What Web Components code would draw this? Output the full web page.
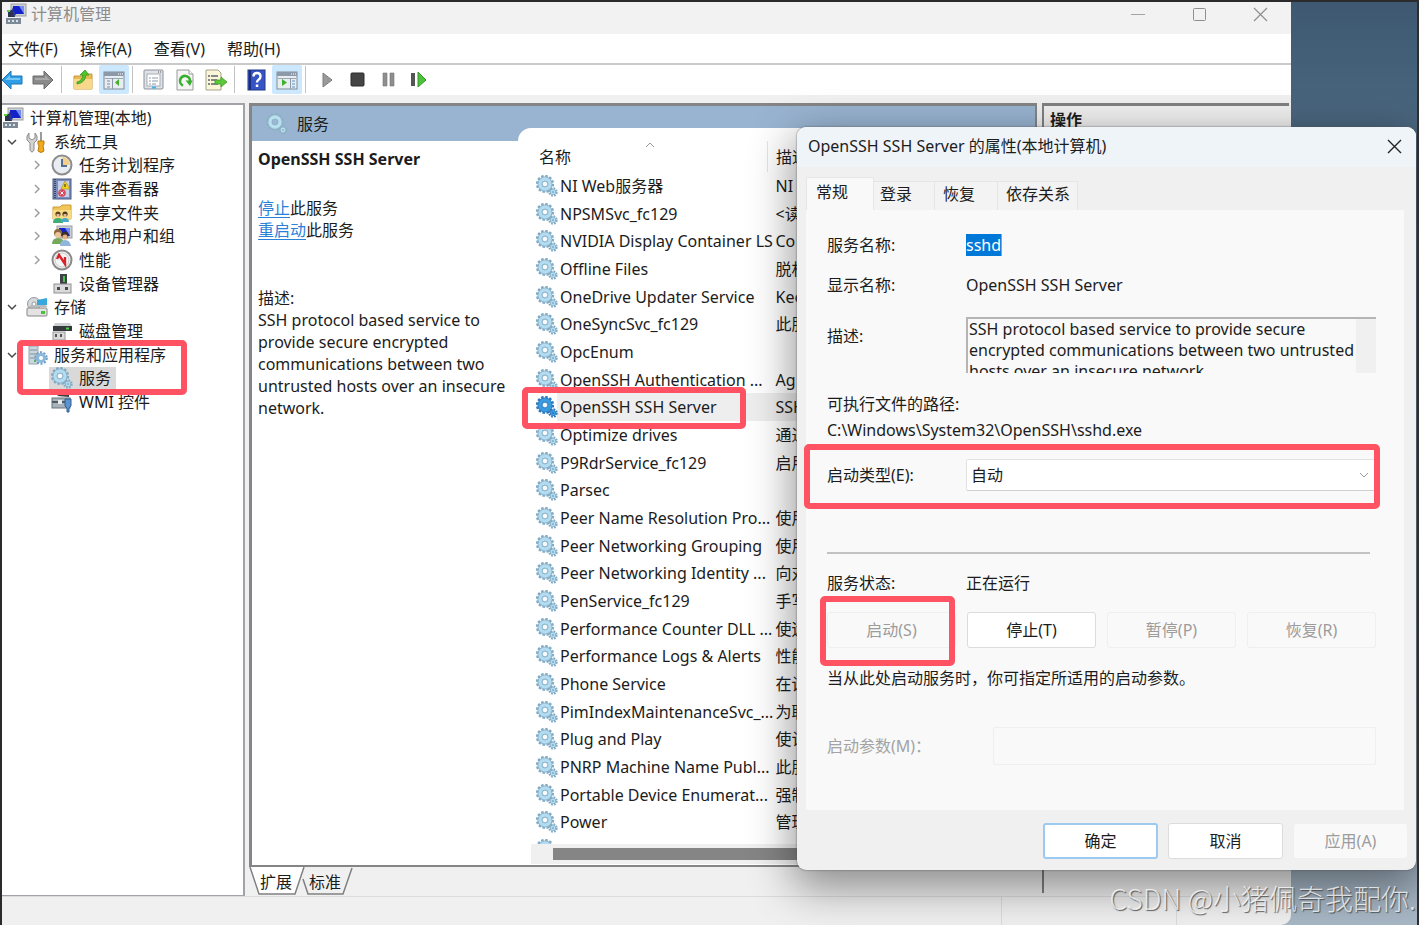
<!DOCTYPE html>
<html lang="zh-CN">
<head>
<meta charset="utf-8">
<title>计算机管理</title>
<style>
  body {
    margin: 0;
    font: 16px/24px 'Noto Sans', 'Noto Sans CJK SC', sans-serif;
    color: #1c1c1c;
  }
</style>
</head>
<body>
<desk-top>
  <console-window>
    <console-tree>
      <tree-node level="0" icon="computer">计算机管理(本地)</tree-node>
      <tree-node level="1" icon="tools" toggle="open">系统工具</tree-node>
      <tree-node level="2" icon="clock" toggle="closed">任务计划程序</tree-node>
      <tree-node level="2" icon="events" toggle="closed">事件查看器</tree-node>
      <tree-node level="2" icon="shared" toggle="closed">共享文件夹</tree-node>
      <tree-node level="2" icon="users" toggle="closed">本地用户和组</tree-node>
      <tree-node level="2" icon="perf" toggle="closed">性能</tree-node>
      <tree-node level="2" icon="device">设备管理器</tree-node>
      <tree-node level="1" icon="storage" toggle="open">存储</tree-node>
      <tree-node level="2" icon="disk">磁盘管理</tree-node>
      <tree-node level="1" icon="server" toggle="open" marked>服务和应用程序</tree-node>
      <tree-node level="2" icon="gear" selected>服务</tree-node>
      <tree-node level="2" icon="wmi">WMI 控件</tree-node>
    </console-tree>
    <services-view></services-view>
    <actions-pane>操作</actions-pane>
  </console-window>
  <service-properties slot="dialog"></service-properties>
  <desk-watermark slot="watermark">CSDN @小猪佩奇我配你.</desk-watermark>
</desk-top>

<script>
const gear = (light, dark, hole) => `
  <circle cx="9" cy="9" r="7.6" fill="none" stroke="${dark}" stroke-width="3" stroke-dasharray="2.4 1.58"/>
  <circle cx="9" cy="9" r="5" fill="none" stroke="${dark}" stroke-width="5"/>
  <circle cx="9" cy="9" r="5" fill="none" stroke="${light}" stroke-width="3.4"/>
  <circle cx="9" cy="9" r="2.8" fill="${hole}" stroke="${dark}" stroke-width=".8"/>
  <circle cx="17" cy="17" r="3.6" fill="none" stroke="${dark}" stroke-width="2.2" stroke-dasharray="1.7 1.13"/>
  <circle cx="17" cy="17" r="3" fill="${dark}"/>
  <circle cx="17" cy="17" r="1.7" fill="none" stroke="${light}" stroke-width="1.4"/>`;

const monitor = (x, y) => `
  <g transform="translate(${x} ${y})">
    <rect width="15" height="12" fill="#cfd0d2" stroke="#9a9da3"/>
    <rect x="2" y="2" width="11" height="8" fill="#1420c8"/>
    <path d="M8 2h5v8z" fill="#6f8dfa"/>
  </g>`;

const paneIcon = (arrow, dots) => `
  <rect x="1" y="3" width="20" height="17" fill="#e9edf1" stroke="#7e8b98"/>
  <rect x="1" y="3" width="20" height="4" fill="#8b99a8"/>
  <path d="M15 5h1M17 5h1M19 5h1" stroke="#fff"/>
  <path d="M2 9.500h18" stroke="#9aa7b4"/>
  ${dots}${arrow}`;

const icons = {
  computer: `${monitor(6, 1)}<path d="M3 9l5-3 2 8H3z" fill="#2b3350"/><path d="M7 4l4 8-3 1z" fill="#28389a"/>
    <rect x="2" y="7" width="3" height="2" fill="#5fd03c"/><rect x="1" y="15" width="15" height="6" fill="#7c8a97"/>
    <path d="M3 18h2M7 18h2M11 18h2" stroke="#dde3e8" stroke-width="2"/>`,
  tools: `<path d="M3 2v5l3 2 3-2V2l2 3v4l-3 3v7q-2 4-4 0v-7L1 9V5z" fill="#d4d4d4" stroke="#8b8b8b"/>
    <path d="M15 1v10" stroke="#9b9b9b" stroke-width="2"/><path d="M12 10h6v3l-1 2 1 5q-3 3-6 0l1-5-1-2z" fill="#f2ab1c" stroke="#b97a10"/>`,
  clock: `<circle cx="11" cy="11" r="9.500" fill="#e7edf2" stroke="#8d8d8d" stroke-width="2"/>
    <path d="M11 11V3a8 8 0 0 1 8 8z" fill="#f2cf8b"/><path d="M11 5v7h5" fill="none" stroke="#54718f" stroke-width="2"/>`,
  events: `<rect x="2" y="1" width="18" height="20" fill="#7a8dbd" stroke="#4c5a82"/><path d="M4 1v20" stroke="#39466e" stroke-width="2" stroke-dasharray="1 1"/>
    <rect x="7" y="3" width="11" height="16" fill="#c4cfe8"/><path d="M14 3l5 8h-9z" fill="#f7d21d" stroke="#a68a13" stroke-width=".6"/>
    <path d="M14 6v3" stroke="#222"/><circle cx="11" cy="15" r="3.800" fill="#d9475a"/><path d="M9.500 13.500l3 3m0-3l-3 3" stroke="#fff"/>`,
  shared: `<path d="M2 5h7l2-2h9v14H2z" fill="#f0c65a" stroke="#c99b34"/><path d="M2 8h18v9H2z" fill="#f9dd85"/>
    <circle cx="7" cy="12" r="2.600" fill="#5c4326"/><circle cx="14" cy="12" r="2.600" fill="#4d3a25"/><path d="M7 12v3M14 12v3" stroke="#e8b991" stroke-width="3"/>
    <path d="M2 21q0-5 5-5t5 5z" fill="#3fae74"/><path d="M10 20q0-4 4-4t4 4z" fill="#4aa9c4"/>`,
  users: `${monitor(6, 1)}<circle cx="7" cy="8" r="4" fill="#8d6a3b"/><circle cx="7" cy="10" r="3" fill="#edc59b"/><path d="M1 19q0-6 6-6t6 6z" fill="#74a85a"/>
    <circle cx="14" cy="10" r="3.500" fill="#3e2f25"/><circle cx="14" cy="12" r="2.600" fill="#e3b389"/><path d="M9 21q0-6 5-6t6 6z" fill="#8fb6dc"/>`,
  perf: `<circle cx="11" cy="11" r="9.500" fill="#f5f5f5" stroke="#8a8a8a" stroke-width="2"/><circle cx="11" cy="11" r="7" fill="none" stroke="#c9c9c9"/>
    <path d="M6 10l2-4 6 9V8" fill="none" stroke="#d8232a" stroke-width="2.400"/>`,
  device: `<rect x="9" y="1" width="7" height="11" fill="#3e4246"/><rect x="12" y="3" width="2" height="6" fill="#49c052"/>
    <rect x="3" y="11" width="17" height="9" fill="#d9d9d9" stroke="#8f8f8f"/><path d="M6 14h3v3H6zM14 14h3v3h-3z" fill="#4a4a4a"/>`,
  storage: `<circle cx="8" cy="8" r="6.500" fill="#d7dadc" stroke="#94999d"/><circle cx="8" cy="8" r="2" fill="#fff" stroke="#94999d"/>
    <path d="M11 4l10-2v7l-10 2z" fill="#38a8dc"/><path d="M2 11l3-2h14l3 2z" fill="#b9bcbf"/><rect x="1" y="12" width="20" height="8" rx="1" fill="#e3e3e3" stroke="#858585"/>
    <rect x="15" y="15" width="4" height="3" fill="#46c23c"/>`,
  disk: `<path d="M4 3h15l2 4H2z" fill="#cdd0d2"/><rect x="2" y="6" width="19" height="5" fill="#35393c"/><path d="M15 8.500h3" stroke="#4bd04f" stroke-width="2"/>
    <rect x="2" y="12" width="12" height="8" fill="#d9d9d9" stroke="#9a9a9a"/><path d="M4 14h2v3H4zM9 14h2v3H9z" fill="#555"/>`,
  server: `<path d="M3 2h9v18H3z" fill="#cbd5dc" stroke="#97a6b0"/><path d="M4 6h7M4 10h7M4 14h7" stroke="#7f919d"/><rect x="8" y="16" width="2" height="2" fill="#53b24a"/>
    <circle cx="15" cy="14" r="5.500" fill="none" stroke="#6c9fc6" stroke-width="2.500" stroke-dasharray="2 1.460"/><circle cx="15" cy="14" r="3.500" fill="none" stroke="#8bb9dc" stroke-width="3"/>`,
  gear: gear('#b4dcf0', '#82abc5', '#f8fbfd'),
  gearfade: gear('#b8e0ee', '#8fb1c6', '#9db8d4'),
  gearblue: gear('#3b9be0', '#2a78bd', '#f4f9ff'),
  wmi: `<path d="M6 5l4-3h8v4z" fill="#3c4146"/><rect x="1" y="7" width="18" height="10" fill="#a7b2bb" stroke="#66727c"/><path d="M1 11h18" stroke="#4f5a63" stroke-width="2"/>
    <path d="M7 9h4v4H7z" fill="#e8ebee"/><path d="M14 8h6v7l-2 2v4h-2v-4l-2-2z" fill="#5a93cf" stroke="#2e5f95"/>`,
  back: `<path d="M1 11l9-9v5h11v8H10v5z" fill="#2e9fe6" stroke="#1c77b8"/><path d="M4 11l5-5v3h10v2z" fill="#74c6f5"/>`,
  forward: `<path d="M21 11l-9-9v5H1v8h11v5z" fill="#8a8a8a" stroke="#6b6b6b"/><path d="M18 11l-5-5v3H3v2z" fill="#aaa"/>`,
  folderup: `<path d="M2 7h8l2-2h8v15H2z" fill="#eabb54" stroke="#c9973a"/><path d="M2 10h18v10H2z" fill="#f8d98c"/>
    <path d="M5 13q5-1 6-7H8l5-5 4 5h-3q-1 8-9 9z" fill="#53c22f" stroke="#349a1b" stroke-width=".8"/>`,
  treepane: paneIcon('<path d="M16 10v7l-4-3.500z" fill="#3fb12b"/>', '<path d="M9.500 9v11" stroke="#8b99a8"/><path d="M4 12h3M4 15h3M4 18h3" stroke="#7e8b98"/>'),
  actionpane: paneIcon('<path d="M6 10v7l5-3.500z" fill="#3fb12b"/>', '<path d="M14.500 9v11" stroke="#8b99a8"/><path d="M16 12h3M16 15h3M16 18h3" stroke="#5b8fc2"/>'),
  props: `<rect x="1" y="1" width="19" height="19" rx="1" fill="#dfe2e6" stroke="#8a919a"/><path d="M15 3h1M17 3h1" stroke="#555"/><rect x="4" y="5" width="13" height="12" fill="#fff" stroke="#a7adb5"/>
    <path d="M6 9h2M6 12h2M6 15h2M9 9h6M9 12h6M9 15h4" stroke="#8d99a8"/><path d="M9 18.500h4" stroke="#3fb5e6" stroke-width="2"/>`,
  refresh: `<path d="M3 1h12l4 4v16H3z" fill="#f5f5f5" stroke="#9b9b9b"/><path d="M15 1v4h4" fill="#fff" stroke="#9b9b9b"/>
    <path d="M9 16.500A5 5 0 1 1 16 12" fill="none" stroke="#38b02f" stroke-width="2.600"/><path d="M11.500 11.500h7l-2.500 5.500z" fill="#38b02f"/>`,
  export: `<path d="M1 1h12l3 3v17H1z" fill="#faf6d7" stroke="#a8a38a"/><path d="M3 7h2M3 11h2M3 15h2M6 7h7M6 11h6M6 15h7" stroke="#5e6470" stroke-width="1.400"/>
    <path d="M10 11h6V8l6 5-6 5v-3h-6z" fill="#5cc83a" stroke="#3c9e22" stroke-width=".8"/>`,
  help: `<rect x="3" y="1" width="17" height="20" fill="#3754c4" stroke="#223888"/><path d="M5 1v20" stroke="#1d2d75" stroke-width="2"/>
    <path d="M8.500 7.500q0-3.500 3.500-3.500t3.500 3.500q0 2-2 3.200-1.500 1-1.500 2.800" fill="none" stroke="#fff" stroke-width="2.400"/><rect x="10.800" y="15.500" width="2.500" height="2.500" fill="#fff"/>`,
  play: `<path d="M7 4l9 7-9 7z" fill="#9a9a9a" stroke="#7d7d7d"/>`,
  stop: `<rect x="4" y="4" width="13" height="13" rx="1" fill="#444" stroke="#2c2c2c"/>`,
  pause: `<path d="M5 4h4v13H5zM12 4h4v13h-4z" fill="#8e8e8e" stroke="#777" stroke-width=".6"/>`,
  restart: `<path d="M2 4h4v13H2z" fill="#555"/><path d="M9 3l8 8-8 7z" fill="#4cc23a" stroke="#38952a"/>`,
  open: `<path d="M7 9l4 4 4-4" fill="none" stroke="#4a4a4a" stroke-width="1.500"/>`,
  closed: `<path d="M9 7l4 4-4 4" fill="none" stroke="#a0a0a0" stroke-width="1.500"/>`
};

function define(name, html, setup) {
  const template = document.createElement('template');
  template.innerHTML = html;
  customElements.define(name, class extends HTMLElement {
    constructor() {
      super();
      this.attachShadow({ mode: 'open' });
      this.shadowRoot.appendChild(template.content.cloneNode(true));
    }

    connectedCallback() {
      if (setup) setup(this, this.shadowRoot);
    }
  });
}

class AppIcon extends HTMLElement {
  connectedCallback() {
    if (!this.shadowRoot) this.attachShadow({ mode: 'open' });
    this.shadowRoot.innerHTML = `
      <style>
        :host { display: block; flex: none; width: 22px; height: 22px; }
        svg { display: block; }
      </style>
      <svg width="22" height="22" viewBox="0 0 22 22" aria-hidden="true">${icons[this.getAttribute('name')] || ''}</svg>`;
  }
}
customElements.define('app-icon', AppIcon);

// red annotation frame, sized by whoever places it
define('mark-frame', `
  <style>
    :host {
      position: absolute;
      z-index: 2;
      box-sizing: border-box;
      border: 6px solid #ff5263;
      border-radius: 5px;
      pointer-events: none;
    }
  </style>
`);

define('desk-top', `
  <style>
    :host {
      display: flex;
      position: relative;
      box-sizing: border-box;
      height: 100vh;
      overflow: hidden;
      padding: 2px 126px 0 2px;
      border-right: 2px solid #2e2e2e;
      background: linear-gradient(#3d5870, #4b6780 14%, #5f7a92 50%, #a9b8c6);
    }
    :host::before {
      content: '';
      position: absolute;
      inset: 0 0 auto 0;
      height: 2px;
      background: #2b2a2c;
    }
    :host::after {
      content: '';
      position: absolute;
      inset: 0 auto 0 0;
      width: 2px;
      background: #2b2a2c;
    }
  </style>
  <slot></slot>
  <slot name="dialog"></slot>
  <slot name="watermark"></slot>
`);

define('console-window', `
  <style>
    :host {
      display: flex;
      flex-direction: column;
      flex: 1;
      min-width: 0;
      background: #f0f0f0;
      border-radius: 0 0 10px 0;
      overflow: hidden;
    }
    header {
      display: flex;
      align-items: center;
      height: 32px;
      box-sizing: border-box;
      padding: 0 21px 8px 3px;
      gap: 4px;
      background: #f2f2f2;
      color: #8c8c8c;
    }
    h1 { flex: 1; margin: 0; font-size: 16px; font-weight: 400; }
    button { border: 0; padding: 0; background: none; font: inherit; color: inherit; }
    .controls { display: flex; gap: 41px; }
    .controls svg { display: block; }
    nav {
      display: flex;
      gap: 22px;
      height: 29px;
      padding-left: 6px;
      background: #fff;
      border-bottom: 2px solid #cacaca;
    }
    .toolbar {
      display: flex;
      align-items: center;
      gap: 1px;
      height: 29px;
      padding-bottom: 1px;
      margin-left: -5px;
      background: #fff;
    }
    .toolbar button { display: grid; place-items: center; width: 30px; height: 29px; border-radius: 2px; }
    .toolbar .on { background: #cce8ff; }
    .toolbar i { width: 1px; height: 27px; margin: 0 5px 0 2px; background: #c3c3c3; }
    main {
      flex: 1;
      min-height: 0;
      display: grid;
      grid-template-columns: 243px minmax(0, 1fr) 250px;
      grid-template-rows: minmax(0, 1fr);
      gap: 4px;
      padding-top: 8px;
    }
    footer {
      display: flex;
      justify-content: flex-end;
      height: 28px;
      border-top: 1px solid #dcdcdc;
    }
    footer span { width: 174px; border-left: 1px solid #dcdcdc; }
    footer span:last-child { width: 114px; }
  </style>
  <header>
    <app-icon name="computer"></app-icon>
    <h1>计算机管理</h1>
    <div class="controls">
      <button aria-label="最小化"><svg width="20" height="20" fill="none" stroke="#a3a3a3"><path d="M3 10.500h14"/></svg></button>
      <button aria-label="最大化"><svg width="20" height="20" fill="none" stroke="#8f8f8f"><rect x="4.500" y="4.500" width="12" height="12" rx="1"/></svg></button>
      <button aria-label="关闭"><svg width="20" height="20" fill="none" stroke="#8f8f8f" stroke-width="1.200"><path d="M4 4l13 13M17 4L4 17"/></svg></button>
    </div>
  </header>
  <nav>
    <button>文件(F)</button>
    <button>操作(A)</button>
    <button>查看(V)</button>
    <button>帮助(H)</button>
  </nav>
  <div class="toolbar">
    <button aria-label="后退"><app-icon name="back"></app-icon></button>
    <button aria-label="前进"><app-icon name="forward"></app-icon></button>
    <i></i>
    <button aria-label="上一级"><app-icon name="folderup"></app-icon></button>
    <button class="on" aria-label="控制台树"><app-icon name="treepane"></app-icon></button>
    <i></i>
    <button aria-label="属性"><app-icon name="props"></app-icon></button>
    <button aria-label="刷新"><app-icon name="refresh"></app-icon></button>
    <button aria-label="导出列表"><app-icon name="export"></app-icon></button>
    <i></i>
    <button aria-label="帮助"><app-icon name="help"></app-icon></button>
    <button class="on" aria-label="操作窗格"><app-icon name="actionpane"></app-icon></button>
    <i></i>
    <button aria-label="启动服务"><app-icon name="play"></app-icon></button>
    <button aria-label="停止服务"><app-icon name="stop"></app-icon></button>
    <button aria-label="暂停服务"><app-icon name="pause"></app-icon></button>
    <button aria-label="重新启动服务"><app-icon name="restart"></app-icon></button>
  </div>
  <main><slot></slot></main>
  <footer><span></span><span></span></footer>
`);

define('console-tree', `
  <style>
    :host {
      display: block;
      box-sizing: border-box;
      padding-top: 1px;
      background: #fff;
      border: 2px solid #a0a3a8;
      border-width: 2px 2px 1px 0;
      line-height: 22px;
    }
    .rows { display: grid; grid-auto-rows: 1fr; height: 308px; }
  </style>
  <div class="rows" role="tree"><slot></slot></div>
`);

define('tree-node', `
  <style>
    :host { display: flex; align-items: center; position: relative; white-space: nowrap; }
    :host([level="2"]) { padding-left: 25px; }
    .toggle { width: 20px; margin-right: 2px; }
    .toggle app-icon { margin-left: -1px; }
    :host([level="0"]) .toggle { display: none; }
    :host([level="0"]) .item { padding-left: 0; }
    .item { display: flex; align-items: center; gap: 6px; padding: 0 5px 0 2px; }
    :host([selected]) .item { background: #d9d9d9; }
    mark-frame { display: none; top: -3px; left: 15px; width: 170px; height: 55px; }
    :host([marked]) mark-frame { display: block; }
  </style>
  <span class="toggle"></span>
  <span class="item"><app-icon></app-icon><span><slot></slot></span></span>
  <mark-frame></mark-frame>
`, (host, root) => {
  host.setAttribute('role', 'treeitem');
  root.querySelector('.item app-icon').setAttribute('name', host.getAttribute('icon'));
  root.querySelector('.item app-icon').connectedCallback();
  const toggle = host.getAttribute('toggle');
  if (toggle) root.querySelector('.toggle').innerHTML = `<app-icon name="${toggle}"></app-icon>`;
});

define('services-view', `
  <style>
    :host { display: flex; flex-direction: column; min-width: 0; }
    .frame {
      flex: 1;
      min-height: 0;
      display: grid;
      grid-template-columns: 266px minmax(0, 1fr);
      grid-template-rows: 35px minmax(0, 1fr);
      border: 3px solid #858585;
      border-right-width: 2px;
      border-bottom-width: 2px;
      background: #fff;
    }
    .banner {
      grid-area: 1 / 1 / 2 / 3;
      display: flex;
      align-items: center;
      gap: 9px;
      padding-left: 14px;
      background: #99b4d1;
    }
    .about { grid-area: 2 / 1; padding: 7px 0 0 6px; line-height: 22px; }
    .about h2 { margin: 0 0 27px; font-size: 16px; line-height: 22px; }
    .about p { margin: 0; }
    .about .links { margin-bottom: 46px; }
    a { color: #2a82d8; text-underline-offset: 3px; }
    service-list { grid-area: 1 / 2 / 3 / 3; margin-top: 22px; }
    .tabs { display: flex; position: relative; z-index: 0; height: 29px; }
    .tabs button {
      position: relative;
      width: 54px;
      margin-right: -5px;
      padding: 0;
      border: 0;
      background: none;
      font: inherit;
      color: inherit;
    }
    .tabs svg { position: absolute; top: 0; left: 0; z-index: -1; }
  </style>
  <div class="frame">
    <div class="banner"><app-icon name="gearfade"></app-icon>服务</div>
    <div class="about">
      <h2>OpenSSH SSH Server</h2>
      <p class="links"><a href="#stop">停止</a>此服务<br><a href="#restart">重启动</a>此服务</p>
      <p>描述:</p>
      <p>SSH protocol based service to provide secure encrypted communications between two untrusted hosts over an insecure network.</p>
    </div>
    <service-list></service-list>
  </div>
  <div class="tabs">
    <button>扩展<svg width="56" height="29"><path d="M1 0l9 27h36l9-27" fill="#fff" stroke="#808080" stroke-width="1.500"/></svg></button>
    <button>标准<svg width="56" height="29"><path d="M5 12l5 15h35l9-26" fill="none" stroke="#808080" stroke-width="1.500"/></svg></button>
  </div>
`);

const services = [
  ['NI Web服务器', 'NI'],
  ['NPSMSvc_fc129', '<读'],
  ['NVIDIA Display Container LS', 'Co'],
  ['Offline Files', '脱机'],
  ['OneDrive Updater Service', 'Kee'],
  ['OneSyncSvc_fc129', '此服'],
  ['OpcEnum', ''],
  ['OpenSSH Authentication ...', 'Ag'],
  ['OpenSSH SSH Server', 'SSH'],
  ['Optimize drives', '通过'],
  ['P9RdrService_fc129', '启用'],
  ['Parsec', ''],
  ['Peer Name Resolution Pro...', '使用'],
  ['Peer Networking Grouping', '使用'],
  ['Peer Networking Identity ...', '向对'],
  ['PenService_fc129', '手写'],
  ['Performance Counter DLL ...', '使远'],
  ['Performance Logs & Alerts', '性能'],
  ['Phone Service', '在设'],
  ['PimIndexMaintenanceSvc_...', '为联'],
  ['Plug and Play', '使计'],
  ['PNRP Machine Name Publ...', '此服'],
  ['Portable Device Enumerat...', '强制'],
  ['Power', '管理'],
  ['', '']
];

define('service-list', `
  <style>
    :host {
      display: flex;
      flex-direction: column;
      min-height: 0;
      padding: 13px 0 1px;
      background: #fff;
      border-top-left-radius: 13px;
    }
    .scroll { flex: 1; min-height: 0; overflow: hidden; padding-left: 13px; }
    table { width: 100%; height: 723px; table-layout: fixed; border-collapse: collapse; }
    th { height: 31px; position: relative; font-weight: 400; text-align: left; padding: 0 8px; }
    th:first-child { width: 220px; border-right: 1px solid #e5e5e5; }
    th svg { position: absolute; top: 0; left: 113px; }
    td { padding: 0 0 0 8px; white-space: nowrap; line-height: 22px; }
    td:first-child { padding-left: 5px; position: relative; }
    .name { display: flex; align-items: center; gap: 2px; height: 22px; }
    .current td { background: #eee; }
    .current td:first-child { background: linear-gradient(90deg, #fff 26px, #eee 26px); }
    mark-frame { top: -6px; left: -9px; width: 224px; height: 42px; }
    .bar { height: 20px; margin-left: 13px; display: flex; align-items: center; background: #f0f0f0; }
    .thumb { width: 70%; height: 12px; margin-left: 22px; background: #858585; }
  </style>
  <div class="scroll">
    <table>
      <thead>
        <tr>
          <th>名称<svg width="12" height="8" fill="none" stroke="#999"><path d="M2 6l4-4 4 4"/></svg></th>
          <th>描述</th>
        </tr>
      </thead>
      <tbody></tbody>
    </table>
  </div>
  <div class="bar"><div class="thumb"></div></div>
`, (host, root) => {
  const body = root.querySelector('tbody');
  services.forEach(([name, about]) => {
    const current = name === 'OpenSSH SSH Server';
    const row = document.createElement('tr');
    row.innerHTML = `
      <td><div class="name"><app-icon name="${current ? 'gearblue' : 'gear'}"></app-icon><span></span></div></td>
      <td></td>`;
    row.querySelector('span').textContent = name;
    row.lastElementChild.textContent = about;
    if (current) {
      row.className = 'current';
      row.firstElementChild.appendChild(document.createElement('mark-frame'));
    }
    body.appendChild(row);
  });
});

define('actions-pane', `
  <style>
    :host {
      display: block;
      box-sizing: border-box;
      margin: 0 2px 3px 1px;
      padding: 2px 6px;
      border-top: 3px solid #808080;
      border-left: 2px solid #808080;
      font-weight: 700;
    }
  </style>
  <slot></slot>
`);

define('service-properties', `
  <style>
    :host {
      position: absolute;
      z-index: 5;
      top: 127px;
      right: 1px;
      width: 619px;
      background: #f0f0f0;
      border-radius: 9px;
      box-shadow: 0 0 2px #555, 0 14px 44px 4px rgba(0, 0, 0, .42);
    }
    button, input, select, textarea { font: inherit; color: inherit; margin: 0; box-sizing: border-box; }
    header {
      display: flex;
      align-items: center;
      justify-content: space-between;
      height: 40px;
      padding: 0 12px 0 11px;
      border-radius: 9px 9px 0 0;
      background: #eff4f9;
    }
    h2 { margin: 0; font-size: 16px; font-weight: 400; line-height: 38px; align-self: start; }
    header button { border: 0; padding: 0; background: none; }
    header svg { display: block; }
    .tabs { display: flex; align-items: flex-end; height: 33px; padding: 10px 0 0 9px; }
    .tabs button {
      height: 29px;
      padding: 0 22px 4px 8px;
      border: 1px solid #e6e6e6;
      border-width: 1px 1px 0 0;
      background: #f3f3f3;
    }
    .tabs .active { height: 33px; width: 68px; padding: 0 0 4px 9px; text-align: left; border-left-width: 1px; background: #f9f9f9; }
    .tabs button:nth-child(2) { padding-left: 6px; }
    .tabs button:last-child { padding-right: 7px; }
    .page { margin: 0 12px 0 9px; padding: 23px 28px 45px 21px; background: #f9f9f9; }
    .field { display: grid; grid-template-columns: 139px minmax(0, 1fr); align-items: center; position: relative; }
    .name { margin-bottom: 16px; }
    .name input {
      field-sizing: content;
      justify-self: start;
      width: auto;
      height: 22px;
      padding: 0;
      border: 0;
      border-right: 1px solid #f08a3c;
      background: #0078d7;
      color: #fff;
    }
    .shown { margin-bottom: 20px; }
    .note { margin-bottom: 18px; }
    .note label { align-self: start; margin-top: 7px; }
    .note div { display: flex; border: 2px solid #b5b5b5; border-width: 2px 0 0 2px; height: 54px; }
    .note textarea {
      flex: 1;
      height: 54px;
      padding: 0 0 0 1px;
      border: 0;
      resize: none;
      overflow: hidden;
      background: none;
      line-height: 21px;
      outline: 0;
    }
    .note i { width: 20px; background: #f0f0f0; }
    .path { margin: 0 0 16px; line-height: 26px; }
    .start select {
      width: 100%;
      height: 32px;
      padding: 0 4px;
      appearance: none;
      border: 1px solid #e2e2e2;
      border-bottom-color: #cfcfcf;
      border-radius: 2px;
      background: #fff;
    }
    .start svg { position: absolute; right: 6px; top: 12px; }
    .start mark-frame { left: -23px; right: -4px; top: -15px; height: 65px; }
    hr { margin: 61px 6px 17px 0; border: 0; border-top: 2px solid #c2c2c2; }
    .buttons { display: grid; grid-template-columns: repeat(4, 1fr); gap: 11px; position: relative; margin: 17px 0 18px; }
    .buttons mark-frame { left: -7px; top: -16px; width: 135px; height: 70px; }
    .push {
      height: 36px;
      padding: 0;
      border: 1px solid #dcdcdc;
      border-radius: 3px;
      background: #fff;
    }
    .push:disabled { border-color: #efefef; background: #f9f9f9; color: #9c9c9c; }
    .push.default { border: 2px solid #9ccaf0; }
    .hint { margin: 0 0 37px; }
    .args { grid-template-columns: 166px minmax(0, 1fr); color: #a3a3a3; }
    .args input { width: 100%; height: 38px; padding: 0 6px; border: 1px solid #efefef; border-radius: 2px; background: #f9f9f9; }
    footer { display: flex; justify-content: flex-end; gap: 10px; padding: 13px 8px 11px; }
    footer .push { width: 115px; }
  </style>
  <header>
    <h2>OpenSSH SSH Server 的属性(本地计算机)</h2>
    <button aria-label="关闭"><svg width="20" height="20" fill="none" stroke="#222" stroke-width="1.400"><path d="M4 3l13 13M17 3L4 16"/></svg></button>
  </header>
  <div class="tabs">
    <button class="active">常规</button>
    <button>登录</button>
    <button>恢复</button>
    <button>依存关系</button>
  </div>
  <div class="page">
    <div class="field name"><label for="name">服务名称:</label><input id="name" value="sshd" readonly></div>
    <div class="field shown"><span>显示名称:</span><span>OpenSSH SSH Server</span></div>
    <div class="field note">
      <label for="note">描述:</label>
      <div><textarea id="note" readonly>SSH protocol based service to provide secure encrypted communications between two untrusted hosts over an insecure network.</textarea><i></i></div>
    </div>
    <p class="path">可执行文件的路径:<br>C:\\Windows\\System32\\OpenSSH\\sshd.exe</p>
    <div class="field start">
      <label for="start">启动类型(E):</label>
      <select id="start"><option>自动</option><option>手动</option><option>禁用</option></select>
      <svg width="12" height="8" fill="none" stroke="#999"><path d="M2 2l4 4 4-4"/></svg>
      <mark-frame></mark-frame>
    </div>
    <hr>
    <div class="field"><span>服务状态:</span><span>正在运行</span></div>
    <div class="buttons">
      <button class="push" disabled>启动(S)</button>
      <button class="push">停止(T)</button>
      <button class="push" disabled>暂停(P)</button>
      <button class="push" disabled>恢复(R)</button>
      <mark-frame></mark-frame>
    </div>
    <p class="hint">当从此处启动服务时，你可指定所适用的启动参数。</p>
    <div class="field args"><label for="args">启动参数(M)：</label><input id="args" disabled></div>
  </div>
  <footer>
    <button class="push default">确定</button>
    <button class="push">取消</button>
    <button class="push" disabled>应用(A)</button>
  </footer>
`);

define('desk-watermark', `
  <style>
    :host {
      position: absolute;
      z-index: 6;
      right: 1px;
      bottom: 7px;
      font: 300 28px/40px 'Noto Sans CJK SC', sans-serif;
      color: rgba(255, 255, 255, .75);
      text-shadow: 1px 1px 1px rgba(60, 60, 60, .8);
      white-space: nowrap;
    }
  </style>
  <slot></slot>
`);
</script>
</body>
</html>
